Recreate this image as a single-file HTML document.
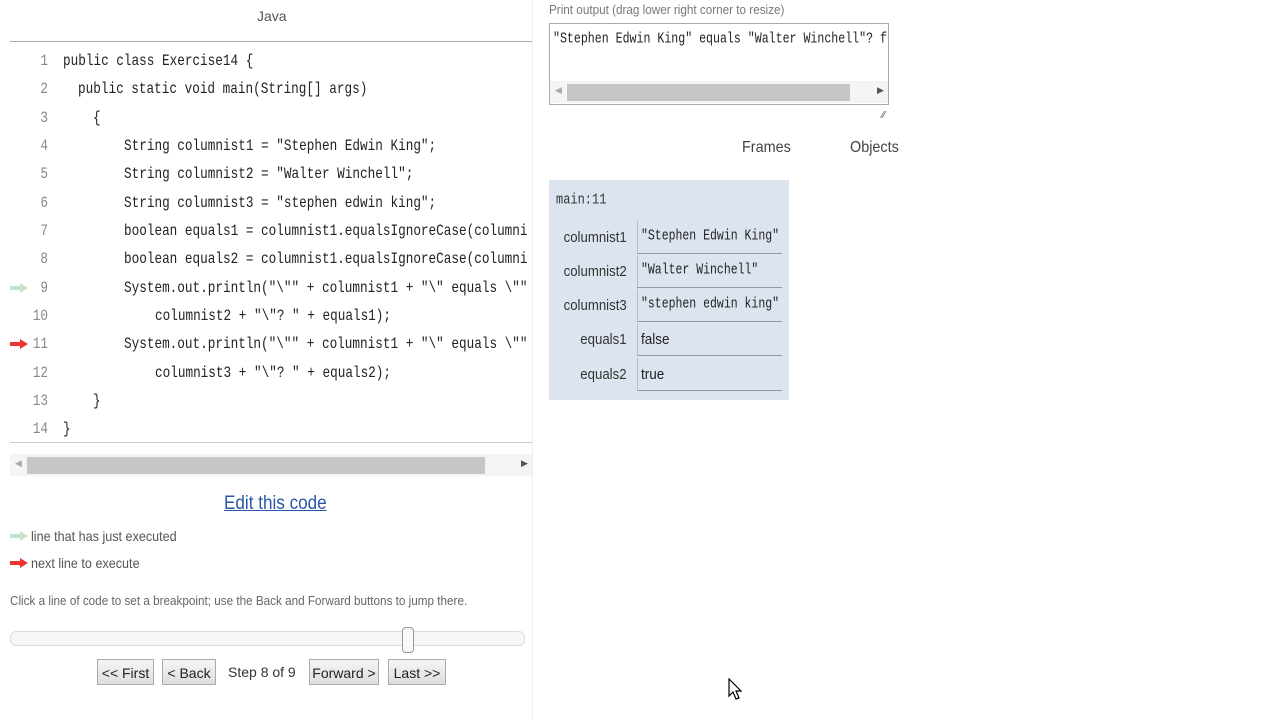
<!DOCTYPE html>
<html><head><meta charset="utf-8"><style>
body{margin:0;width:1280px;height:720px;background:#fff;position:relative;overflow:hidden;font-family:"Liberation Sans",sans-serif;color:#333}
.a{position:absolute;white-space:pre}
.m{font-family:"Liberation Mono",monospace}
.code{font-size:12.7px;color:#222;transform:scaleY(1.22);transform-origin:left center}
.ln{font-size:12.7px;color:#888;transform:scaleY(1.22);width:40px;text-align:right}
.btn{position:absolute;top:659px;height:26px;border:1px solid #aaa;background:linear-gradient(#f6f6f6,#ddd);font-size:14px;line-height:26px;text-align:center;color:#222;box-sizing:border-box}
.arrow{position:absolute;width:18px;height:10px}
.sx{transform:scaleX(0.9);transform-origin:left center}
</style></head><body>
<div class="a" style="left:257px;top:8px;font-size:14px;color:#555">Java</div>
<div class="a" style="left:10px;top:41px;width:522px;height:1px;background:#aaa"></div>
<div class="a" style="left:10px;top:442px;width:522px;height:1px;background:#ccc"></div>
<div class="a" style="left:532px;top:0;width:1px;height:720px;background:#eee"></div>

<div class="a ln m" style="left:8px;top:53px">1</div><div class="a code m" style="left:63px;top:53px">public class Exercise14 {</div>
<div class="a ln m" style="left:8px;top:81px">2</div><div class="a code m" style="left:78px;top:81px">public static void main(String[] args)</div>
<div class="a ln m" style="left:8px;top:110px">3</div><div class="a code m" style="left:93px;top:110px">{</div>
<div class="a ln m" style="left:8px;top:138px">4</div><div class="a code m" style="left:124px;top:138px">String columnist1 = "Stephen Edwin King";</div>
<div class="a ln m" style="left:8px;top:166px">5</div><div class="a code m" style="left:124px;top:166px">String columnist2 = "Walter Winchell";</div>
<div class="a ln m" style="left:8px;top:195px">6</div><div class="a code m" style="left:124px;top:195px">String columnist3 = "stephen edwin king";</div>
<div class="a ln m" style="left:8px;top:223px">7</div><div class="a code m" style="left:124px;top:223px;width:405px;overflow:hidden">boolean equals1 = columnist1.equalsIgnoreCase(columni</div>
<div class="a ln m" style="left:8px;top:251px">8</div><div class="a code m" style="left:124px;top:251px;width:405px;overflow:hidden">boolean equals2 = columnist1.equalsIgnoreCase(columni</div>
<div class="a ln m" style="left:8px;top:280px">9</div><div class="a code m" style="left:124px;top:280px">System.out.println("\"" + columnist1 + "\" equals \""</div>
<div class="a ln m" style="left:8px;top:308px">10</div><div class="a code m" style="left:155px;top:308px">columnist2 + "\"? " + equals1);</div>
<div class="a ln m" style="left:8px;top:336px">11</div><div class="a code m" style="left:124px;top:336px">System.out.println("\"" + columnist1 + "\" equals \""</div>
<div class="a ln m" style="left:8px;top:365px">12</div><div class="a code m" style="left:155px;top:365px">columnist3 + "\"? " + equals2);</div>
<div class="a ln m" style="left:8px;top:393px">13</div><div class="a code m" style="left:93px;top:393px">}</div>
<div class="a ln m" style="left:8px;top:421px">14</div><div class="a code m" style="left:63px;top:421px">}</div>

<svg class="arrow" style="left:10px;top:283px" viewBox="0 0 18 10"><path d="M0 3h10V0l8 5-8 5V7H0z" fill="#c5e3cc"/></svg>
<svg class="arrow" style="left:10px;top:339px" viewBox="0 0 18 10"><path d="M0 3h10V0l8 5-8 5V7H0z" fill="#e33"/></svg>

<div class="a" style="left:10px;top:454px;width:522px;height:22px;background:#f4f4f4"></div>
<div class="a" style="left:27px;top:457px;width:458px;height:17px;background:#c6c6c6"></div>
<div class="a" style="left:15px;top:458px;font-size:9px;color:#aaa">◀</div>
<div class="a" style="left:521px;top:458px;font-size:9px;color:#555">▶</div>

<div class="a sx" style="left:224px;top:493px;font-size:19px;color:#2a55a8;text-decoration:underline">Edit this code</div>
<svg class="arrow" style="left:10px;top:531px" viewBox="0 0 18 10"><path d="M0 3h10V0l8 5-8 5V7H0z" fill="#c5e3cc"/></svg>
<div class="a sx" style="left:31px;top:528px;font-size:14px;color:#555">line that has just executed</div>
<svg class="arrow" style="left:10px;top:558px" viewBox="0 0 18 10"><path d="M0 3h10V0l8 5-8 5V7H0z" fill="#e33"/></svg>
<div class="a sx" style="left:31px;top:555px;font-size:14px;color:#555">next line to execute</div>
<div class="a sx" style="left:10px;top:593px;font-size:13px;color:#666">Click a line of code to set a breakpoint; use the Back and Forward buttons to jump there.</div>
<div class="a" style="left:10px;top:631px;width:513px;height:13px;border:1px solid #ddd;border-radius:6px;background:#f6f6f6"></div>
<div class="a" style="left:402px;top:627px;width:10px;height:24px;border:1px solid #999;border-radius:4px;background:#fafafa"></div>
<div class="btn" style="left:97px;width:57px">&lt;&lt; First</div>
<div class="btn" style="left:162px;width:54px">&lt; Back</div>
<div class="a" style="left:228px;top:664px;font-size:14px;color:#333">Step 8 of 9</div>
<div class="btn" style="left:309px;width:70px">Forward &gt;</div>
<div class="btn" style="left:388px;width:58px">Last &gt;&gt;</div>

<div class="a sx" style="left:549px;top:2px;font-size:13px;color:#777">Print output (drag lower right corner to resize)</div>
<div class="a" style="left:549px;top:23px;width:338px;height:80px;border:1px solid #aaa;overflow:hidden">
  <div class="a m" style="left:3px;top:9px;font-size:11.6px;color:#222;transform:scaleY(1.3)">"Stephen Edwin King" equals "Walter Winchell"? f</div>
  <div class="a" style="left:0;top:57px;width:338px;height:22px;background:#f4f4f4"></div>
  <div class="a" style="left:17px;top:60px;width:283px;height:17px;background:#c6c6c6"></div>
  <div class="a" style="left:5px;top:61px;font-size:9px;color:#aaa">◀</div>
  <div class="a" style="left:327px;top:61px;font-size:9px;color:#555">▶</div>
</div>
<div class="a" style="left:882px;top:110px;font-size:10px;color:#555">⁄⁄</div>
<div class="a sx" style="left:742px;top:139px;font-size:16px;color:#444">Frames</div>
<div class="a sx" style="left:850px;top:139px;font-size:16px;color:#444">Objects</div>

<div class="a" style="left:549px;top:180px;width:240px;height:220px;background:#dce5ef"></div>
<div class="a m" style="left:556px;top:193px;font-size:12px;color:#333;transform:scaleY(1.2)">main:11</div>
<div class="a" style="left:549px;top:229px;width:78px;text-align:right;font-size:15px;color:#333"><span style="display:inline-block;transform:scaleX(0.88);transform-origin:right center">columnist1</span></div>
<div class="a" style="left:549px;top:263px;width:78px;text-align:right;font-size:15px;color:#333"><span style="display:inline-block;transform:scaleX(0.88);transform-origin:right center">columnist2</span></div>
<div class="a" style="left:549px;top:297px;width:78px;text-align:right;font-size:15px;color:#333"><span style="display:inline-block;transform:scaleX(0.88);transform-origin:right center">columnist3</span></div>
<div class="a" style="left:549px;top:331px;width:78px;text-align:right;font-size:15px;color:#333"><span style="display:inline-block;transform:scaleX(0.88);transform-origin:right center">equals1</span></div>
<div class="a" style="left:549px;top:366px;width:78px;text-align:right;font-size:15px;color:#333"><span style="display:inline-block;transform:scaleX(0.88);transform-origin:right center">equals2</span></div>
<div class="a" style="left:637px;top:221px;width:144px;height:32px;border-left:1px solid #bbb;border-bottom:1px solid #999"></div>
<div class="a" style="left:637px;top:255px;width:144px;height:32px;border-left:1px solid #bbb;border-bottom:1px solid #999"></div>
<div class="a" style="left:637px;top:289px;width:144px;height:32px;border-left:1px solid #bbb;border-bottom:1px solid #999"></div>
<div class="a" style="left:637px;top:323px;width:144px;height:32px;border-left:1px solid #bbb;border-bottom:1px solid #999"></div>
<div class="a" style="left:637px;top:358px;width:144px;height:32px;border-left:1px solid #bbb;border-bottom:1px solid #999"></div>
<div class="a m" style="left:641px;top:230px;font-size:11.5px;color:#222;transform:scaleY(1.25)">"Stephen Edwin King"</div>
<div class="a m" style="left:641px;top:264px;font-size:11.5px;color:#222;transform:scaleY(1.25)">"Walter Winchell"</div>
<div class="a m" style="left:641px;top:298px;font-size:11.5px;color:#222;transform:scaleY(1.25)">"stephen edwin king"</div>
<div class="a sx" style="left:641px;top:331px;font-size:15px;color:#222">false</div>
<div class="a sx" style="left:641px;top:366px;font-size:15px;color:#222">true</div>

<svg class="a" style="left:728px;top:678px" width="14" height="22" viewBox="0 0 14 22"><path d="M1 1v17l4-4 3 7 3-1-3-7h5z" fill="#fff" stroke="#000" stroke-width="1.2"/></svg>
</body></html>
